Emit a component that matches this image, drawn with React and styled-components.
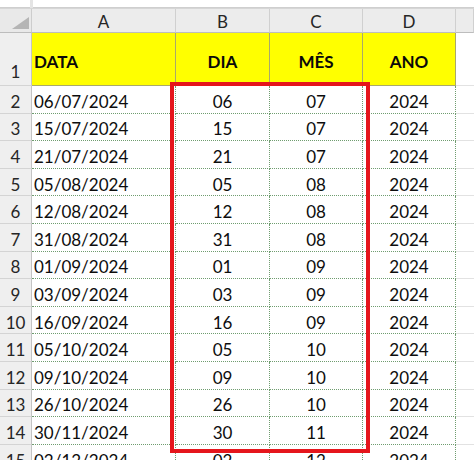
import styled, { createGlobalStyle } from "styled-components";

const rows = [
  ["06/07/2024", "06", "07", "2024"],
  ["15/07/2024", "15", "07", "2024"],
  ["21/07/2024", "21", "07", "2024"],
  ["05/08/2024", "05", "08", "2024"],
  ["12/08/2024", "12", "08", "2024"],
  ["31/08/2024", "31", "08", "2024"],
  ["01/09/2024", "01", "09", "2024"],
  ["03/09/2024", "03", "09", "2024"],
  ["16/09/2024", "16", "09", "2024"],
  ["05/10/2024", "05", "10", "2024"],
  ["09/10/2024", "09", "10", "2024"],
  ["26/10/2024", "26", "10", "2024"],
  ["30/11/2024", "30", "11", "2024"],
  ["02/12/2024", "02", "12", "2024"],
];

const GlobalStyle = createGlobalStyle`
  * { box-sizing: border-box; }
  html, body {
    margin: 0;
    padding: 0;
    background: #ffffff;
    overflow: hidden;
  }
`;

const Page = styled.div`
  width: 474px;
  height: 460px;
  overflow: hidden;
  position: relative;
  font-family: Lato, "Liberation Sans", sans-serif;
  color: #0d0d0d;
`;

const TopStrip = styled.div`
  height: 9px;
  display: grid;
  grid-template-columns: 30px 1fr;
  gap: 3px;
  background: #e4e4e4;
  border-bottom: 1px solid #d6d6d6;
`;

const StripBox = styled.div`
  background: #ffffff;
  border-bottom: 1px solid #cfcfcf;
`;

const Sheet = styled.div`
  display: grid;
  grid-template-columns: 32px 144px 94px 93px 93px 1fr;
  grid-template-rows: 24px 53px repeat(14, 27.6px);
`;

const Corner = styled.div`
  background: #e9e9e9;
  border-right: 1px solid #cdcdcd;
  border-bottom: 1px solid #bdbdbd;
  position: relative;
`;

const Triangle = styled.div`
  position: absolute;
  right: 2px;
  bottom: 3px;
  width: 0;
  height: 0;
  border-left: 17px solid transparent;
  border-bottom: 12px solid #b5b5b5;
`;

const ColHead = styled.div`
  background: #ececec;
  border-right: 1px solid #d0d0d0;
  border-bottom: 1px solid #bdbdbd;
  display: flex;
  align-items: center;
  justify-content: center;
  padding-top: 2px;
  font-size: 17px;
  color: #262626;
`;

const RowHead = styled.div`
  background: #efefef;
  border-right: 1px solid #c4c4c4;
  border-bottom: 1px solid #d4d4d4;
  display: flex;
  align-items: ${(p) => (p.$tall ? "flex-end" : "center")};
  justify-content: center;
  padding-top: ${(p) => (p.$tall ? "0" : "4px")};
  padding-bottom: ${(p) => (p.$tall ? "3px" : "0")};
  font-size: 17px;
  color: #262626;
`;

const HeadCell = styled.div`
  background: #ffff00;
  border-right: 1px solid #a9a96a;
  border-bottom: 1px solid #a9a96a;
  display: flex;
  align-items: center;
  justify-content: ${(p) => (p.$left ? "flex-start" : "center")};
  padding: 4px 2px 0;
  font-size: 17px;
  font-weight: 700;
  color: #0a0a0a;
`;

const Cell = styled.div`
  border-right: 1px dotted #6f9c6f;
  border-bottom: 1px dotted #6f9c6f;
  display: flex;
  align-items: center;
  justify-content: ${(p) => (p.$left ? "flex-start" : "center")};
  padding: 4px 2px 0;
  font-size: 17px;
  white-space: nowrap;
`;

const Blank = styled.div`
  border-bottom: 1px solid #e2e2e2;
  background: #ffffff;
`;

const RedBox = styled.div`
  position: absolute;
  left: 170px;
  top: 82px;
  width: 200px;
  height: 371px;
  border: 4px solid #e5161c;
`;

export default function App() {
  return (
    <>
      <GlobalStyle />
      <Page>
        <TopStrip>
          <StripBox />
          <StripBox />
        </TopStrip>
        <Sheet>
          <Corner>
            <Triangle />
          </Corner>
          <ColHead>A</ColHead>
          <ColHead>B</ColHead>
          <ColHead>C</ColHead>
          <ColHead>D</ColHead>
          <ColHead />

          <RowHead $tall>1</RowHead>
          <HeadCell $left>DATA</HeadCell>
          <HeadCell>DIA</HeadCell>
          <HeadCell>MÊS</HeadCell>
          <HeadCell>ANO</HeadCell>
          <Blank />

          {rows.map((r, i) => (
            <Row key={i} n={i + 2} values={r} />
          ))}
        </Sheet>
        <RedBox />
      </Page>
    </>
  );
}

function Row({ n, values }) {
  return (
    <>
      <RowHead>{n}</RowHead>
      <Cell $left>{values[0]}</Cell>
      <Cell>{values[1]}</Cell>
      <Cell>{values[2]}</Cell>
      <Cell>{values[3]}</Cell>
      <Blank />
    </>
  );
}
